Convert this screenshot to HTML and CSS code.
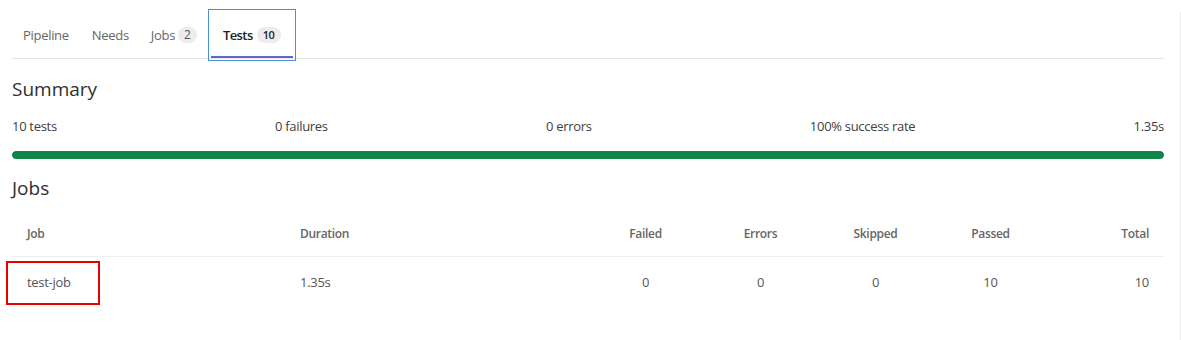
FILE: index.html
```html
<!DOCTYPE html>
<html>
<head>
<meta charset="utf-8">
<link rel="stylesheet" href="styles.css">
</head>
<body>
<div class="frame">
  <ul class="tabs">
    <li class="tab">Pipeline</li>
    <li class="tab">Needs</li>
    <li class="tab">Jobs<span class="badge">2</span></li>
    <li class="tab active">Tests<span class="badge">10</span></li>
  </ul>

  <h3 class="heading h-summary">Summary</h3>
  <div class="summary-row">
    <span>10 tests</span>
    <span>0 failures</span>
    <span>0 errors</span>
    <span>100% success rate</span>
    <span>1.35s</span>
  </div>
  <div class="bar"><div class="bar-fill" style="width:100%"></div></div>

  <h3 class="heading h-jobs">Jobs</h3>
  <div class="table">
    <div class="trow thead">
      <div class="cell c-job">Job</div>
      <div class="cell c-dur">Duration</div>
      <div class="cell c-num">Failed</div>
      <div class="cell c-num">Errors</div>
      <div class="cell c-num">Skipped</div>
      <div class="cell c-num">Passed</div>
      <div class="cell c-total">Total</div>
    </div>
    <div class="trow tbody">
      <div class="cell c-job"><span class="mark"></span>test-job</div>
      <div class="cell c-dur">1.35s</div>
      <div class="cell c-num">0</div>
      <div class="cell c-num">0</div>
      <div class="cell c-num">0</div>
      <div class="cell c-num">10</div>
      <div class="cell c-total">10</div>
    </div>
  </div>
</div>
</body>
</html>
```

FILE: styles.css
```css
html, body {
  margin: 0;
  padding: 0;
  background: #fff;
}
body {
  font-family: "Open Sans", "Noto Sans", sans-serif;
  font-size: 13px;
  letter-spacing: -0.3px;
  color: #333;
}
.frame {
  box-sizing: border-box;
  width: 1181px;
  height: 340px;
  padding: 0 16px 0 12px;
  border-right: 1px solid #ececec;
}
.tabs {
  list-style: none;
  margin: 12px 0 0 0;
  padding: 0;
  display: flex;
  border-bottom: 1px solid #e5e5e5;
}
.tab {
  display: flex;
  align-items: center;
  height: 46px;
  box-sizing: border-box;
  padding: 0 11px 0 12px;
  line-height: 20px;
  color: #666;
}
.tab:first-child {
  padding-left: 11px;
}
.tab:nth-child(2) {
  padding-right: 10px;
}
.tab.active {
  padding: 0 12px;
  margin-left: 3px;
  color: #222;
  font-weight: 600;
  letter-spacing: -0.6px;
  box-shadow: inset 0 -2px 0 #6666c4;
  outline: 1.5px solid #4a8fd9;
  outline-offset: 2px;
}
.badge {
  display: inline-block;
  margin-left: 3px;
  padding: 0 6px;
  height: 16px;
  line-height: 16px;
  border-radius: 8px;
  background: #ececef;
  color: #555;
  font-size: 12px;
  font-weight: 400;
  letter-spacing: 0;
}
.tab.active .badge {
  margin-left: 4px;
  padding: 0 6px;
  font-size: 11px;
  letter-spacing: -0.3px;
  color: #222;
  font-weight: 600;
}
.heading {
  margin: 0;
  font-size: 19px;
  line-height: 28px;
  font-weight: 400;
  letter-spacing: 0;
  color: #303030;
}
.h-summary {
  margin-top: 16px;
}
.summary-row {
  margin-top: 13px;
  display: flex;
  justify-content: space-between;
  line-height: 20px;
  color: #404040;
}
.bar {
  margin-top: 15px;
  height: 8px;
  border-radius: 4px;
  background: #ececef;
  overflow: hidden;
}
.bar-fill {
  height: 100%;
  background: #108548;
  border-radius: 4px;
}
.h-jobs {
  margin-top: 15px;
}
.table {
  margin-top: 8px;
}
.trow {
  display: grid;
  grid-template-columns: 273px 288px 115px 115px 115px 115px 1fr;
  padding: 0 15px;
  line-height: 20px;
}
.thead {
  padding-top: 14px;
  padding-bottom: 12px;
  border-bottom: 1px solid #f0f0f0;
  font-size: 12px;
  font-weight: 600;
  color: #666;
}
.tbody {
  padding-top: 15px;
  padding-bottom: 15px;
  color: #555;
}
.cell {
  position: relative;
}
.c-num {
  text-align: center;
}
.c-total {
  text-align: right;
}
.mark {
  position: absolute;
  left: -21px;
  top: -11px;
  width: 90px;
  height: 40px;
  border: 2px solid #e60000;
}
```
